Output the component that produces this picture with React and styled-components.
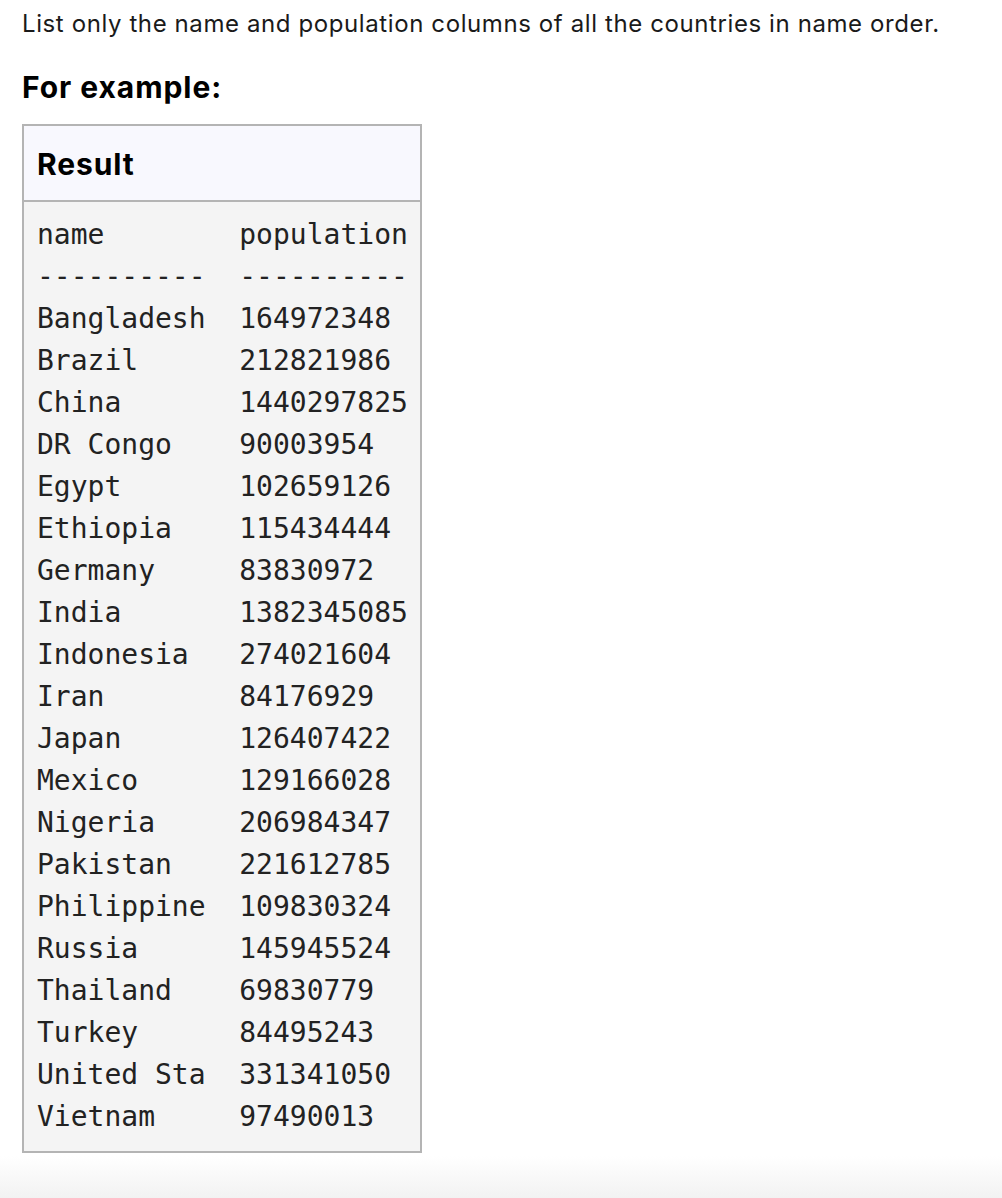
import React from "react";
import styled, { createGlobalStyle } from "styled-components";

const rows = [
    ["Bangladesh", "164972348"],
    ["Brazil", "212821986"],
    ["China", "1440297825"],
    ["DR Congo", "90003954"],
    ["Egypt", "102659126"],
    ["Ethiopia", "115434444"],
    ["Germany", "83830972"],
    ["India", "1382345085"],
    ["Indonesia", "274021604"],
    ["Iran", "84176929"],
    ["Japan", "126407422"],
    ["Mexico", "129166028"],
    ["Nigeria", "206984347"],
    ["Pakistan", "221612785"],
    ["Philippine", "109830324"],
    ["Russia", "145945524"],
    ["Thailand", "69830779"],
    ["Turkey", "84495243"],
    ["United Sta", "331341050"],
    ["Vietnam", "97490013"],
];

const App = () => {
    return (
        <>
            <GlobalStyle />
            <Page>
                <Question>
                    List only the name and population columns of all the countries in name order.
                </Question>
                <Heading>For example:</Heading>
                <ResultBox>
                    <ResultHeader>Result</ResultHeader>
                    <ResultBody>
                        <Cell>name</Cell>
                        <Cell>population</Cell>
                        <Cell>----------</Cell>
                        <Cell>----------</Cell>
                        {rows.map(([name, pop]) => (
                            <React.Fragment key={name}>
                                <Cell>{name}</Cell>
                                <Cell>{pop}</Cell>
                            </React.Fragment>
                        ))}
                    </ResultBody>
                </ResultBox>
            </Page>
            <Footer />
        </>
    );
};

const GlobalStyle = createGlobalStyle`
    html, body {
        margin: 0;
        padding: 0;
        background: #ffffff;
    }
    body {
        font-family: Inter, "Liberation Sans", Arial, sans-serif;
        color: #000;
    }
`;

const Page = styled.div`
    padding: 10px 22px 0;
    height: 1156px;
    box-sizing: border-box;
`;

const Question = styled.p`
    margin: 0;
    font-size: 24px;
    line-height: 28px;
    letter-spacing: 0.6px;
    color: #1a1a1a;
`;

const Heading = styled.h4`
    margin: 30px 0 0;
    font-size: 30px;
    line-height: 38px;
    letter-spacing: 0.95px;
    font-weight: bold;
`;

const ResultBox = styled.div`
    margin-top: 18px;
    width: 400px;
    box-sizing: border-box;
    border: 2px solid #b4b4b4;
    background: #f4f4f4;
`;

const ResultHeader = styled.div`
    height: 76px;
    box-sizing: border-box;
    padding: 2px 13px 0;
    display: flex;
    align-items: center;
    background: #f8f8fe;
    border-bottom: 2px solid #b4b4b4;
    font-size: 30px;
    letter-spacing: 0.9px;
    font-weight: bold;
`;

const ResultBody = styled.div`
    display: grid;
    grid-template-columns: 10ch 10ch;
    column-gap: 2ch;
    padding: 12px 13px 13px;
    font-family: "DejaVu Sans Mono", "Liberation Mono", monospace;
    font-size: 28px;
    line-height: 42px;
    color: #222;
`;

const Cell = styled.span`
    white-space: pre;
`;

const Footer = styled.div`
    height: 42px;
    background: linear-gradient(#ffffff, #f2f2f2);
`;

export default App;
